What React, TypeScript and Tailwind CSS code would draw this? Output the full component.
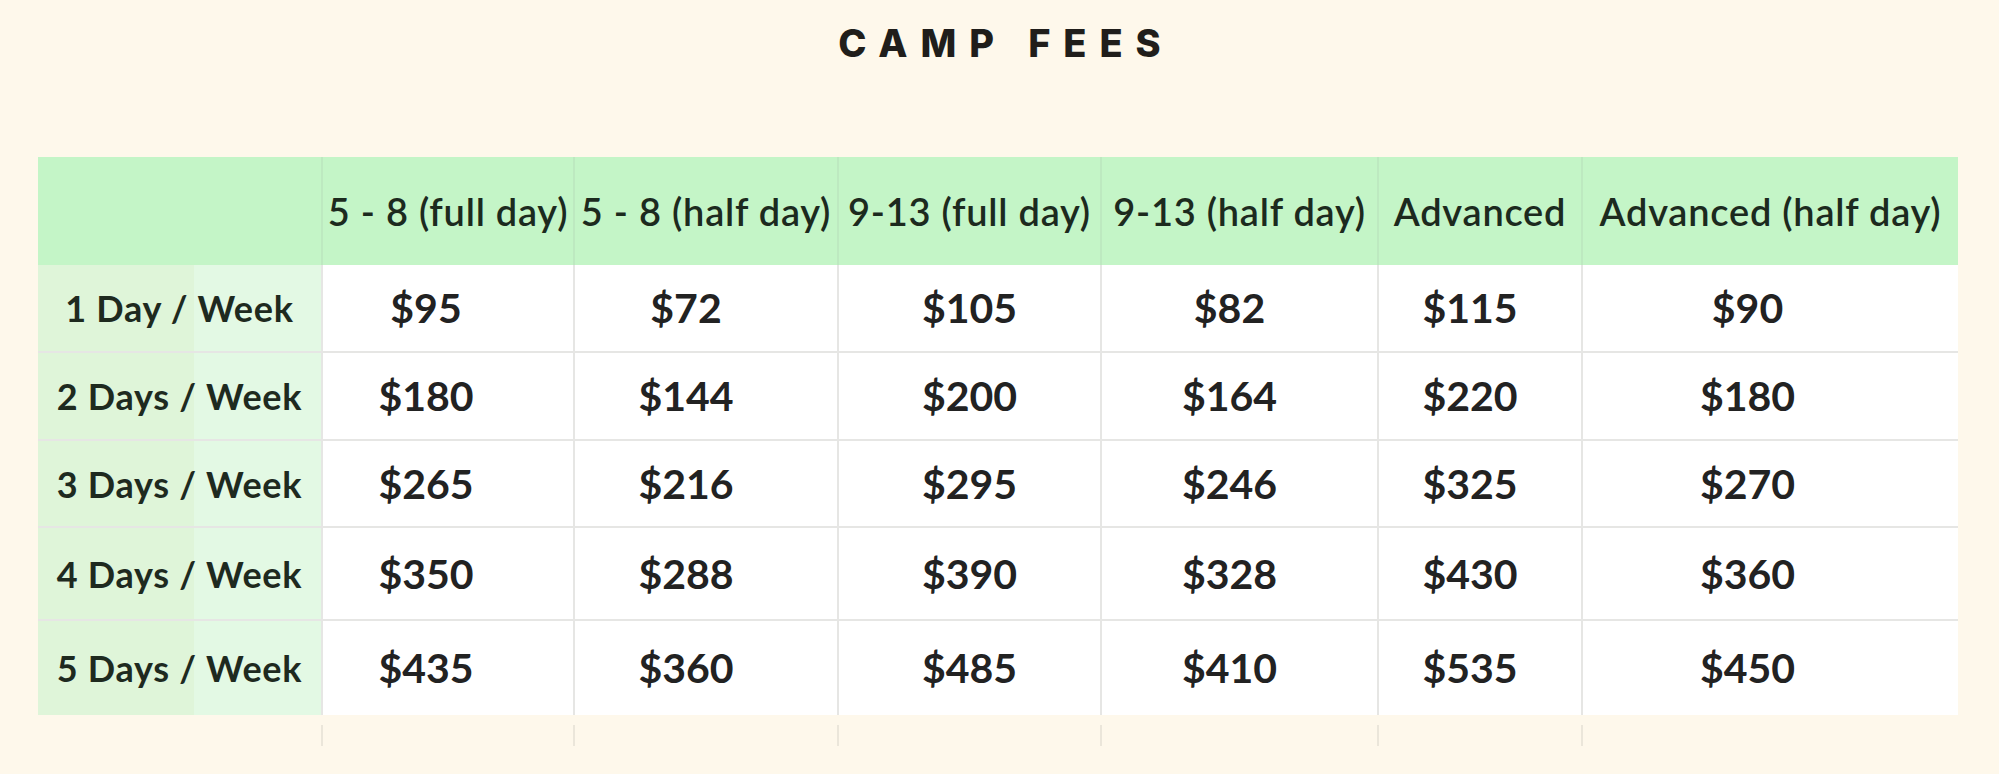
const headers = [
  '5 - 8 (full day)',
  '5 - 8 (half day)',
  '9-13 (full day)',
  '9-13 (half day)',
  'Advanced',
  'Advanced (half day)',
]

const rows = [
  { label: '1 Day / Week', prices: ['$95', '$72', '$105', '$82', '$115', '$90'] },
  { label: '2 Days / Week', prices: ['$180', '$144', '$200', '$164', '$220', '$180'] },
  { label: '3 Days / Week', prices: ['$265', '$216', '$295', '$246', '$325', '$270'] },
  { label: '4 Days / Week', prices: ['$350', '$288', '$390', '$328', '$430', '$360'] },
  { label: '5 Days / Week', prices: ['$435', '$360', '$485', '$410', '$535', '$450'] },
]

// the prices are not quite centred in the source, nudge each column
const nudge = ['pr-[44px]', 'pr-[40px]', 'pr-0', 'pr-[20px]', 'pr-[20px]', 'pr-[46px]']

const rowHeights = ['h-[88px]', 'h-[88px]', 'h-[87px]', 'h-[93px]', 'h-[104px] pb-[10px]']

const grid = 'grid w-[1920px] grid-cols-[283px_252px_264px_263px_277px_204px_377px]'

export default function App() {
  return (
    <div className="min-h-[774px] w-[1999px] bg-[#fef8eb] font-['Lato','Liberation_Sans',sans-serif] text-[#222222]">
      {/* Title */}
      <div className="h-[157px] pt-[24px]">
        <h1 className="pl-[0.34em] text-center font-['Inter','Liberation_Sans',sans-serif] text-[38px] font-extrabold leading-none tracking-[0.34em] text-[#201e1b]">
          CAMP FEES
        </h1>
      </div>

      <div className="pl-[38px]">
        {/* Header row */}
        <div className={`${grid} h-[108px] bg-[#c4f5c7]`}>
          <div />
          {headers.map((h) => (
            <div
              key={h}
              className="flex items-center justify-center whitespace-nowrap border-l-2 border-[#bde9c0] text-[38px] font-semibold tracking-[0.02em] text-[#1c2a1e]"
            >
              {h}
            </div>
          ))}
        </div>

        {/* Body rows */}
        {rows.map((row, i) => (
          <div
            key={row.label}
            className={`${grid} ${rowHeights[i]} ${i < rows.length - 1 ? 'border-b-2 border-[#e6e6e4]' : ''}`}
          >
            <div className="flex items-center justify-center whitespace-nowrap bg-[linear-gradient(90deg,#dff5d9_55%,#e3f9e4_55%)] text-[36px] font-bold tracking-[0.02em] text-[#1e2a1f]">
              {row.label}
            </div>
            {row.prices.map((p, j) => (
              <div
                key={j}
                className={`flex items-center justify-center border-l-2 border-[#e6e6e4] bg-white text-[41px] font-bold ${nudge[j]}`}
              >
                {p}
              </div>
            ))}
          </div>
        ))}

        {/* grid lines run on a little past the table */}
        <div className={`${grid} h-[21px]`}>
          <div />
          {headers.map((h) => (
            <div key={h} className="border-l-2 border-[#ebe6da]" />
          ))}
        </div>
      </div>
    </div>
  )
}
